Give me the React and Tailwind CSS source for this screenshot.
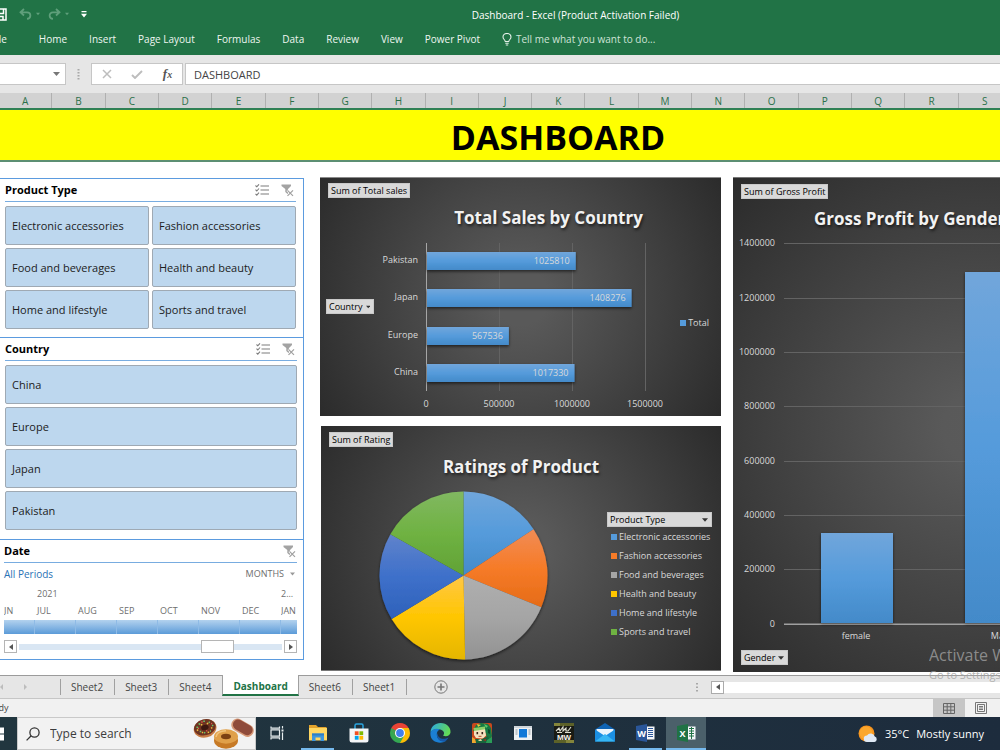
import React from "react";

const COLUMNS = "ABCDEFGHIJKLMNOPQRS".split("");
const RIBBON_TABS = ["Home", "Insert", "Page Layout", "Formulas", "Data", "Review", "View", "Power Pivot"];
const PRODUCTS = [
  "Electronic accessories",
  "Fashion accessories",
  "Food and beverages",
  "Health and beauty",
  "Home and lifestyle",
  "Sports and travel",
];
const COUNTRIES = ["China", "Europe", "Japan", "Pakistan"];
const MONTHS = ["JN", "JUL", "AUG", "SEP", "OCT", "NOV", "DEC", "JAN"];

const SALES = [
  { name: "Pakistan", value: 1025810, y: 22 },
  { name: "Japan", value: 1408276, y: 59 },
  { name: "Europe", value: 567536, y: 97 },
  { name: "China", value: 1017330, y: 134 },
];

const SLICES = [
  { name: "Electronic accessories", from: 0, to: 56.5, top: "#70a6db", mid: "#559bdb", end: "#438ac9" },
  { name: "Fashion accessories", from: 56.5, to: 112.3, top: "#f18c55", mid: "#f67b28", end: "#e56b17" },
  { name: "Food and beverages", from: 112.3, to: 178.9, top: "#afafaf", mid: "#a5a5a5", end: "#929292" },
  { name: "Health and beauty", from: 178.9, to: 238.8, top: "#ffc746", mid: "#ffc600", end: "#e5b600" },
  { name: "Home and lifestyle", from: 238.8, to: 299.5, top: "#6083cb", mid: "#3e70ca", end: "#2e61ba" },
  { name: "Sports and travel", from: 299.5, to: 360, top: "#81b861", mid: "#6fb242", end: "#61a235" },
];

function Caret({ className = "" }) {
  return (
    <svg className={className} width="7" height="4" viewBox="0 0 7 4" aria-hidden="true">
      <path d="M0 0h7L3.5 4z" fill="currentColor" />
    </svg>
  );
}

/* ---------- Ribbon ---------- */

function TitleBar() {
  return (
    <div className="flex h-7 items-center text-white">
      <button type="button" aria-label="Save" className="-ml-1.5">
        <svg width="13" height="13" viewBox="0 0 13 13" fill="none" stroke="#fff" strokeWidth="1.5">
          <path d="M1 1h11v11H1z" />
          <path d="M3.5 1v4.5h6V1M4 12V8.500h5V12" />
        </svg>
      </button>
      <button type="button" aria-label="Undo" className="ml-3 flex items-center gap-1 text-[#5f9f7b]">
        <svg width="13" height="12" viewBox="0 0 13 12" fill="none" stroke="currentColor" strokeWidth="1.8">
          <path d="M5 1L1.500 4.300 5 7.500M2 4.300h6c4.500 0 4.500 6.200 0 6.500" />
        </svg>
        <Caret className="w-1" />
      </button>
      <button type="button" aria-label="Redo" className="ml-2 flex items-center gap-1 text-[#5f9f7b]">
        <svg width="13" height="12" viewBox="0 0 13 12" fill="none" stroke="currentColor" strokeWidth="1.8">
          <path d="M8 1l3.500 3.300L8 7.500M11 4.300H5c-4.500 0-4.500 6.200 0 6.500" />
        </svg>
        <Caret className="w-1" />
      </button>
      <button type="button" aria-label="Customize Quick Access Toolbar" className="ml-3">
        <svg width="6" height="7" viewBox="0 0 6 7" fill="#fff">
          <path d="M0.500 0h5v1.200h-5zM0 2.800h6L3 6.500z" />
        </svg>
      </button>
      <p className="flex-1 pt-0.5 pl-[104px] text-center text-[10px] leading-4">
        Dashboard - Excel (Product Activation Failed)
      </p>
      <div className="w-[4%]" />
    </div>
  );
}

function Ribbon() {
  return (
    <header className="bg-[#217346] font-['Open_Sans',sans-serif]">
      <TitleBar />
      <nav className="-ml-5 flex h-[27px] items-start pt-[3px] text-[10px] leading-4 text-[#eef6f1]">
        <button type="button" className="mr-2.5 px-[11px]">File</button>
        {RIBBON_TABS.map((t) => (
          <button key={t} type="button" className="px-[11px] whitespace-nowrap">{t}</button>
        ))}
        <button type="button" className="flex items-center gap-1 px-[11px] whitespace-nowrap text-[#cfe3d7]">
          <svg width="10" height="13" viewBox="0 0 10 13" fill="none" stroke="#e6f1ea" strokeWidth="1.100">
            <path d="M3.300 8.500C3.300 7 1 6.300 1 4a4 3.500 0 0 1 8 0c0 2.300-2.300 3-2.300 4.500zM3.300 10.300h3.400M3.800 12h2.400" />
          </svg>
          Tell me what you want to do...
        </button>
      </nav>
    </header>
  );
}

function FormulaBar() {
  return (
    <div className="flex h-[38px] items-center bg-[#e6e6e6] font-['Open_Sans',sans-serif]">
      <div className="flex h-[22px] w-[66px] items-center justify-end border border-l-0 border-[#c6c6c6] bg-white pr-[5px] text-[#777]">
        <button type="button" aria-label="Name box"><Caret className="block" /></button>
      </div>
      <svg className="mx-[11px]" width="3" height="11" viewBox="0 0 3 11" fill="#a8a8a8">
        <path d="M0.500 0h2v1.500h-2zM0.500 3h2v1.500h-2zM0.500 6h2v1.500h-2zM0.500 9h2v1.500h-2z" />
      </svg>
      <div className="flex h-[22px] w-[92px] items-center justify-around border border-[#c6c6c6] bg-white">
        <button type="button" aria-label="Cancel">
          <svg width="10" height="10" viewBox="0 0 10 10" stroke="#bdbdbd" strokeWidth="1.500"><path d="M1 1l8 8M9 1L1 9" /></svg>
        </button>
        <button type="button" aria-label="Enter">
          <svg width="12" height="9" viewBox="0 0 12 9" fill="none" stroke="#bdbdbd" strokeWidth="1.900"><path d="M1 5l3 3 7-7" /></svg>
        </button>
        <button type="button" aria-label="Insert function" className="font-['Liberation_Serif',serif] text-[13px] leading-4 font-bold text-[#555] italic">
          f<span className="text-[10px]">x</span>
        </button>
      </div>
      <input
        aria-label="Formula bar"
        defaultValue="DASHBOARD"
        className="ml-0.5 h-[22px] min-w-0 flex-1 border border-r-0 border-[#c6c6c6] bg-white pl-2 text-[11px] text-[#444] outline-none"
      />
    </div>
  );
}

function ColumnHeads() {
  return (
    <div className="overflow-hidden border-b-2 border-[#2f8054] bg-[#d2d2d2]">
      <div className="-ml-px flex h-[15px] w-[101.3%]">
        {COLUMNS.map((c) => (
          <div key={c} className="flex-1 border-r border-[#b0b0b0] text-center font-['Open_Sans',sans-serif] text-[10px] leading-4 text-[#2b7049]">
            {c}
          </div>
        ))}
      </div>
    </div>
  );
}

/* ---------- Slicers ---------- */

function MultiSelectIcon() {
  return (
    <svg width="14" height="12" viewBox="0 0 14 12" fill="none" stroke="#7d7d7d" strokeWidth="1.100">
      <path d="M0.500 1.500l1.300 1.300L4 0.300M0.500 5.700L1.800 7 4 4.500M0.500 9.900l1.300 1.300L4 8.700" />
      <path d="M5.500 2H14M5.500 6H14M5.500 10H14" />
    </svg>
  );
}

function ClearFilterIcon() {
  return (
    <svg width="14" height="13" viewBox="0 0 14 13">
      <path d="M0.500 0.500h9.500v1.500L7 5v5.500L4.300 8V5L0.500 2z" fill="#a3a3a3" />
      <path d="M6.500 6l6 6M12.500 6l-6 6" stroke="#fff" strokeWidth="3" />
      <path d="M6.500 6.300l5.500 5.500M12 6.300l-5.500 5.500" stroke="#a0a0a0" strokeWidth="1.200" />
    </svg>
  );
}

function SlicerHeader({ title, multi = true }) {
  return (
    <div className={multi ? "flex h-[23px] items-center border-b border-[#78ace0] pr-px" : "flex h-[23px] items-center border-b border-[#78ace0]"}>
      <h3 className="flex-1 text-[11px] leading-4 font-bold text-black">{title}</h3>
      {multi && (
        <button type="button" aria-label="Multi-select" className="mr-3"><MultiSelectIcon /></button>
      )}
      <button type="button" aria-label="Clear filter"><ClearFilterIcon /></button>
    </div>
  );
}

function Tile({ children }) {
  return (
    <button type="button" className="h-[39px] rounded-[2px] border border-[#9fa9b3] bg-[#bdd7ee] pl-1.5 text-left text-[11px] leading-4 text-[#1c1c1c]">
      {children}
    </button>
  );
}

function Timeline() {
  return (
    <section className="border-y border-r border-[#5b9bdf] pr-1.5 pb-1.5 pl-1">
      <SlicerHeader title="Date" multi={false} />
      <div className="flex items-center justify-between pt-[3px] text-[10px] leading-4">
        <span className="text-[#2a72b5]">All Periods</span>
        <button type="button" className="flex items-center gap-1.5 pr-0.5 text-[9px] text-[#6e6e6e]">
          MONTHS <Caret className="w-[5px] text-[#999]" />
        </button>
      </div>
      <div className="grid grid-cols-[31px_repeat(6,1fr)_16px] pt-1 text-[9px] leading-4 text-[#6e6e6e]">
        <span className="col-start-2 pl-0.5">2021</span>
        <span className="col-start-8">2...</span>
      </div>
      <div className="grid grid-cols-[31px_repeat(6,1fr)_16px] text-[9px] text-[#6e6e6e]">
        {MONTHS.map((m, i) => (
          <span key={m} className={i === 0 || i === 7 ? "overflow-hidden leading-[18px]" : "pl-0.5 leading-[18px]"}>{m}</span>
        ))}
        {MONTHS.map((m) => (
          <button key={m} type="button" aria-label={m} className="h-[14px] border-r border-[#8fbbe6] bg-linear-to-b from-[#b3d2ee] to-[#5b9bd8] last:border-r-0" />
        ))}
      </div>
      <div className="flex items-center gap-0.5 pt-1.5">
        <button type="button" aria-label="Scroll left" className="flex h-[13px] w-[13px] items-center justify-center border border-[#b5b5b5] bg-white">
          <svg width="4" height="6" viewBox="0 0 4 6"><path d="M4 0v6L0 3z" fill="#555" /></svg>
        </button>
        <input
          type="range"
          aria-label="Timeline position"
          defaultValue="79"
          className="h-[6px] min-w-0 flex-1 appearance-none bg-[#d9e6f3] [&::-webkit-slider-thumb]:h-[13px] [&::-webkit-slider-thumb]:w-[33px] [&::-webkit-slider-thumb]:appearance-none [&::-webkit-slider-thumb]:border [&::-webkit-slider-thumb]:border-[#b5b5b5] [&::-webkit-slider-thumb]:bg-white"
        />
        <button type="button" aria-label="Scroll right" className="flex h-[13px] w-[13px] items-center justify-center border border-[#b5b5b5] bg-white">
          <svg width="4" height="6" viewBox="0 0 4 6"><path d="M0 0v6l4-3z" fill="#555" /></svg>
        </button>
      </div>
    </section>
  );
}

function Slicers() {
  return (
    <aside className="mt-px w-[304px] shrink-0 font-['Open_Sans',sans-serif]">
      <section className="border-t border-r border-[#5b9bdf] pr-[7px] pb-2 pl-[5px]">
        <SlicerHeader title="Product Type" />
        <div className="grid grid-cols-2 gap-[3px] pt-1">
          {PRODUCTS.map((p) => <Tile key={p}>{p}</Tile>)}
        </div>
      </section>
      <section className="border-t border-r border-[#5b9bdf] pr-1.5 pb-[9px] pl-[5px]">
        <SlicerHeader title="Country" />
        <div className="grid gap-[3px] pt-1">
          {COUNTRIES.map((c) => <Tile key={c}>{c}</Tile>)}
        </div>
      </section>
      <Timeline />
    </aside>
  );
}

/* ---------- Charts ---------- */

function FieldButton({ children, caret = false, className = "" }) {
  return (
    <button
      type="button"
      className={`flex h-[15px] items-center justify-between gap-0.5 border border-[#c9c9c9] bg-[#d9d9d9] px-0.5 text-[9px] leading-3 whitespace-nowrap text-black ${className}`}
    >
      {children}
      {caret && <Caret className="mx-px w-1.5 text-[#333]" />}
    </button>
  );
}

function ChartTitle({ children, className = "" }) {
  return (
    <h2 className={`text-[17px] leading-6 font-bold whitespace-nowrap text-[#f2f2f2] [text-shadow:1px_2px_3px_rgba(0,0,0,0.6)] ${className}`}>
      {children}
    </h2>
  );
}

const CHART_BG = "bg-[radial-gradient(circle_at_center,#595959_0%,#595959_12%,#2b2b2b_100%)]";

function BlueDefs({ id }) {
  return (
    <defs>
      <linearGradient id={id} x1="0" y1="0" x2="0" y2="1">
        <stop offset="0" stopColor="#71a6db" />
        <stop offset="0.5" stopColor="#559bdb" />
        <stop offset="1" stopColor="#438ac9" />
      </linearGradient>
      <filter id={`${id}-shadow`} x="-10%" y="-20%" width="120%" height="160%">
        <feDropShadow dx="0" dy="1.500" stdDeviation="1.500" floodColor="#000" floodOpacity="0.6" />
      </filter>
    </defs>
  );
}

function SalesChart() {
  const x = (v) => 52 + (v / 500000) * 73;
  return (
    <section className={`w-[401px] border-t border-[#8a8a8a] ${CHART_BG}`}>
      <div className="flex px-2 pt-[5px]"><FieldButton>Sum of Total sales</FieldButton></div>
      <ChartTitle className="mt-2 pl-14 text-center">Total Sales by Country</ChartTitle>
      <div className="flex items-start">
        <FieldButton caret className="mt-[69px] ml-1.5 w-12">Country</FieldButton>
        <svg className="min-w-0 flex-1" height="186" viewBox="0 0 302 186" preserveAspectRatio="xMinYMin meet" fontSize="9" fill="#d9d9d9">
          <BlueDefs id="sales-blue" />
          <path d="M125.500 13v148M198.500 13v148M271.500 13v148" stroke="#636363" />
          <path d="M52.500 13v148" stroke="#a6a6a6" />
          {SALES.map((s) => (
            <g key={s.name}>
              <text x="44" y={s.y + 11} textAnchor="end">{s.name}</text>
              <rect x="53" y={s.y} width={x(s.value) - 53} height="18" fill="url(#sales-blue)" filter="url(#sales-blue-shadow)" />
              <text x={x(s.value) - 6} y={s.y + 12} textAnchor="end">{s.value}</text>
            </g>
          ))}
          {[0, 500000, 1000000, 1500000].map((t) => (
            <text key={t} x={x(t)} y="177" textAnchor="middle">{t}</text>
          ))}
        </svg>
        <p className="mt-[85px] mr-3 flex items-center gap-0.5 text-[9px] leading-4 text-[#d9d9d9]">
          <span className="h-1.5 w-1.5 bg-[#559bdb]" />Total
        </p>
      </div>
    </section>
  );
}

function point(deg, r, cx, cy) {
  const a = (deg * Math.PI) / 180;
  return `${cx + r * Math.sin(a)} ${cy - r * Math.cos(a)}`;
}

function RatingChart() {
  const cx = 142.5;
  const cy = 96.5;
  const r = 84;
  return (
    <section className={`ml-px w-[400px] border-b border-[#777] ${CHART_BG}`}>
      <div className="flex px-2 pt-1.5"><FieldButton>Sum of Rating</FieldButton></div>
      <ChartTitle className="mt-2 text-center">Ratings of Product</ChartTitle>
      <div className="flex items-start">
        <svg className="min-w-0 flex-1" height="191" viewBox="0 0 286 191">
          <defs>
            {SLICES.map((s, i) => (
              <linearGradient key={s.name} id={`slice-${i}`} x1="0" y1="0" x2="0" y2="1">
                <stop offset="0" stopColor={s.top} />
                <stop offset="0.5" stopColor={s.mid} />
                <stop offset="1" stopColor={s.end} />
              </linearGradient>
            ))}
            <filter id="pie-shadow" x="-10%" y="-10%" width="120%" height="120%">
              <feDropShadow dx="0" dy="1.500" stdDeviation="1.500" floodColor="#000" floodOpacity="0.6" />
            </filter>
          </defs>
          <g filter="url(#pie-shadow)">
            {SLICES.map((s, i) => (
              <path
                key={s.name}
                d={`M${cx} ${cy}L${point(s.from, r, cx, cy)}A${r} ${r} 0 0 1 ${point(s.to, r, cx, cy)}Z`}
                fill={`url(#slice-${i})`}
              />
            ))}
          </g>
        </svg>
        <div className="mt-[33px] mr-[9px] w-[105px]">
          <FieldButton caret className="w-full">Product Type</FieldButton>
          <ul className="text-[9px] leading-[19px] whitespace-nowrap text-[#d9d9d9]">
            {SLICES.map((s) => (
              <li key={s.name} className="flex items-center gap-0.5 pl-1">
                <span className="h-1.5 w-1.5 shrink-0" style={{ background: s.mid }} />
                {s.name}
              </li>
            ))}
          </ul>
        </div>
      </div>
    </section>
  );
}

function ProfitChart() {
  const zero = 392.5;
  const step = 54.3;
  const ticks = [0, 200000, 400000, 600000, 800000, 1000000, 1200000, 1400000];
  return (
    <section className="ml-3 min-w-0 flex-1 overflow-hidden border-t border-[#777] bg-[radial-gradient(circle_at_245px_250px,#5a5a5a_0%,#595959_10%,#2b2b2b_100%)] pb-[7px]">
      <div className="flex px-2 pt-1.5"><FieldButton>Sum of Gross Profit</FieldButton></div>
      <ChartTitle className="mt-2 pl-[81px]">Gross Profit by Gender</ChartTitle>
      <svg className="block" width="340" height="419" viewBox="0 0 340 419" fontSize="9" fill="#d9d9d9">
        <BlueDefs id="profit-blue" />
        {ticks.map((t, i) => (
          <g key={t}>
            <path d={`M51 ${Math.round(zero - i * step) + 0.5}H340`} stroke={i ? "#636363" : "#a0a0a0"} />
            <text x="42" y={zero - i * step + 3} textAnchor="end">{t}</text>
          </g>
        ))}
        <rect x="88" y="302" width="72" height="90" fill="url(#profit-blue)" filter="url(#profit-blue-shadow)" />
        <rect x="232" y="41" width="72" height="351" fill="url(#profit-blue)" filter="url(#profit-blue-shadow)" />
        <path d="M51 393H340" stroke="#a0a0a0" />
        <text x="123" y="408" textAnchor="middle">female</text>
        <text x="268" y="408" textAnchor="middle">Male</text>
      </svg>
      <div className="flex px-2"><FieldButton caret>Gender</FieldButton></div>
    </section>
  );
}

/* ---------- Sheet tabs and status bar ---------- */

function SheetTab({ children }) {
  return (
    <button type="button" className="my-[3px] border-r border-[#a0a0a0] pr-[11px] pl-2.5 text-[#444]">{children}</button>
  );
}

function SheetTabs() {
  return (
    <div className="flex h-6 border-y border-t-[#9b9b9b] border-b-[#c6c6c6] bg-[#e6e6e6] font-['Open_Sans',sans-serif] text-[10px] leading-4">
      <div className="my-[3px] flex w-[61px] items-center gap-5 border-r border-[#a0a0a0] text-[#bdbdbd]">
        <button type="button" aria-label="Previous sheet">
          <svg width="4" height="6" viewBox="0 0 4 6"><path d="M3 0v6L0 3z" fill="currentColor" /></svg>
        </button>
        <button type="button" aria-label="Next sheet">
          <svg width="4" height="6" viewBox="0 0 4 6"><path d="M0 0v6l3-3z" fill="currentColor" /></svg>
        </button>
      </div>
      <SheetTab>Sheet2</SheetTab>
      <SheetTab>Sheet3</SheetTab>
      <button type="button" className="my-[3px] pr-[11px] pl-2.5 text-[#444]">Sheet4</button>
      <button type="button" className="-mt-px mb-0.5 border-x border-b-2 border-x-[#a0a0a0] border-b-[#217346] bg-white px-2.5 pt-0.5 font-bold text-[#217346]">
        Dashboard
      </button>
      <SheetTab>Sheet6</SheetTab>
      <SheetTab>Sheet1</SheetTab>
      <button type="button" aria-label="New sheet" className="ml-[27px]">
        <svg width="14" height="14" viewBox="0 0 14 14" fill="none" stroke="#777">
          <circle cx="7" cy="7" r="6.200" />
          <path d="M7 3.500v7M3.500 7h7" strokeWidth="1.600" />
        </svg>
      </button>
      <div className="flex-1" />
      <div className="flex w-[304px] items-center">
        <svg width="3" height="9" viewBox="0 0 3 9" fill="#a8a8a8"><path d="M0 0h2v1.500H0zM0 3.500h2V5H0zM0 7h2v1.500H0z" /></svg>
        <button type="button" aria-label="Scroll sheet left" className="ml-3 flex h-[13px] w-[13px] items-center justify-center border border-[#ababab] bg-white">
          <svg width="4" height="6" viewBox="0 0 4 6"><path d="M4 0v6L0 3z" fill="#555" /></svg>
        </button>
        <div className="h-[11px] flex-1 bg-white" />
      </div>
    </div>
  );
}

function StatusBar() {
  return (
    <div className="flex h-[18px] justify-end bg-[#f1f1f1] font-['Open_Sans',sans-serif] text-[9px] leading-[17px] text-[#444]">
      <span className="-ml-[17px] flex-1">Ready</span>
      <button type="button" aria-label="Normal view" className="flex w-8 items-center justify-center bg-[#c6c6c6]">
        <svg width="12" height="11" viewBox="0 0 12 11" fill="none" stroke="#666"><path d="M0.500 0.500h11v10H0.500zM0.500 3.800h11M0.500 7.200h11M4.200 0.500v10M7.800 0.500v10" /></svg>
      </button>
      <button type="button" aria-label="Page layout view" className="mr-[3px] flex w-8 items-center justify-center">
        <svg width="12" height="12" viewBox="0 0 12 12" fill="none" stroke="#777"><path d="M0.500 0.500h11v11H0.500zM2.500 2.500h7v7h-7zM4 4.500h4M4 6h4M4 7.500h4" /></svg>
      </button>
    </div>
  );
}

/* ---------- Taskbar ---------- */

function FolderIcon() {
  return (
    <svg width="20" height="18" viewBox="0 0 20 18">
      <path d="M1 1h7l2 2h8.500v4H1z" fill="#e3a32c" />
      <path d="M1 4h18v12.500H1z" fill="#ffd762" />
      <path d="M4 9.500h12V17h-3.500v-3.500h-5V17H4z" fill="#3d96dd" />
      <path d="M4 9.500h12v2H4z" fill="#2e7fc4" />
    </svg>
  );
}

function StoreIcon() {
  return (
    <svg width="20" height="20" viewBox="0 0 20 20">
      <path d="M6 6V2.500Q6 1 7.500 1h5Q14 1 14 2.500V6" fill="none" stroke="#2aa5e0" strokeWidth="1.500" />
      <path d="M0.500 5.500h19V17q0 2.500-2.500 2.500H3Q.5 19.500.5 17z" fill="#f4f6f8" />
      <path d="M5.800 8.300h3.800v3.800H5.800z" fill="#f25022" /><path d="M10.400 8.300h3.800v3.800h-3.800z" fill="#7fba00" />
      <path d="M5.800 12.900h3.800v3.800H5.800z" fill="#00a4ef" /><path d="M10.400 12.900h3.800v3.800h-3.800z" fill="#ffb900" />
    </svg>
  );
}

function ChromeIcon() {
  return (
    <svg width="20" height="20" viewBox="0 0 20 20">
      <path d="M10 10L1.340 5A10 10 0 0 1 18.660 5z" fill="#ea4335" />
      <path d="M10 10V5h8.660A10 10 0 0 1 10 20z" fill="#fbbc05" />
      <path d="M1.340 5A10 10 0 0 0 10 20l4.330-7.500H10z" fill="#34a853" />
      <path d="M1.340 5h8.660v5l-4.330 2.500z" fill="#ea4335" />
      <path d="M1.340 5l4.330 7.500L10 10z" fill="#34a853" />
      <circle cx="10" cy="10" r="5" fill="#fff" />
      <circle cx="10" cy="10" r="3.900" fill="#3f7fee" />
    </svg>
  );
}

function EdgeIcon() {
  return (
    <svg width="21" height="20" viewBox="0 0 21 20">
      <defs>
        <linearGradient id="edge-top" x1="0" y1="0" x2="1" y2="0.300">
          <stop offset="0" stopColor="#2aa7e8" /><stop offset="1" stopColor="#62d957" />
        </linearGradient>
      </defs>
      <path d="M0.500 9C1 3.500 5 0 10.500 0 17 0 21 5 20.500 9.500 20 13 16 14 13 12.500c1-1 1.500-2.500.5-4C11.500 5.500 4.500 4.500 0.500 9z" fill="url(#edge-top)" />
      <path d="M0.500 9c2.500-3.300 6.500-4 9.500-2.500-3 1-4 4.500-2.500 8 1.500 3 5 4.500 8.500 3.500C10 22-1 19 0.500 9z" fill="#1b7fd4" />
      <path d="M7.500 10c0 5 5 7.500 11 4.500-1 2-2 3-3.500 3.800C9 19.500 5.500 14 7.500 10z" fill="#1658a8" />
    </svg>
  );
}

function GameIcon() {
  return (
    <svg width="20" height="20" viewBox="0 0 20 20">
      <rect width="20" height="20" rx="2" fill="#c9481c" />
      <path d="M1 8L4 2l5-2 7 1 3 4 1 8-2 4-3 1-1-8z" fill="#157a42" />
      <path d="M5 1l4 1-3 2z" fill="#f6c33b" /><path d="M12 1l4 2-2 2z" fill="#5ecb68" />
      <path d="M16 6l2 1v4l-2-1z" fill="#0c4a2a" />
      <path d="M2 7l11-1.500 1 7-3 3-7-.5L2 12z" fill="#f4e2bd" />
      <path d="M1.500 5l11.500-1.500v2.700L2 8z" fill="#8bd068" />
      <path d="M4.500 9h1.600v2.300H4.500zM9.500 9h1.600v2.300H9.500z" fill="#3a241a" />
      <path d="M6.500 13.300h3" stroke="#b04a2d" />
      <path d="M3 16h7l6-3 1 4-3 3H4z" fill="#17663c" />
      <path d="M0 14l3 2 1 4H0z" fill="#eda72f" /><path d="M15 17l5-3v6h-6z" fill="#2a9d57" />
      <path d="M6 17l3-1 1 2H7z" fill="#e8d9a0" /><path d="M11 17l3-1v2z" fill="#b3251f" />
    </svg>
  );
}

function WindowIcon() {
  return (
    <svg width="18" height="14" viewBox="0 0 18 14">
      <path d="M0 0h18v14H0z" fill="#eef1f3" /><path d="M0 0h18v2H0z" fill="#cfd6db" />
      <path d="M5 3h8v8.500H5z" fill="#1279d8" />
      <path d="M1.500 4h2M1.500 6h2M1.500 8h2M14.500 4h2M14.500 6h2M14.500 8h2" stroke="#8a979e" />
    </svg>
  );
}

function WarfareIcon() {
  return (
    <svg width="20" height="20" viewBox="0 0 20 20">
      <path d="M0 0h20v20H0z" fill="#5c6128" /><path d="M0 3h20v14H0z" fill="#1a1b14" />
      <path d="M0 0h6v3H0zM12 17h8v3h-8z" fill="#84853b" />
      <path d="M2 8l3-3 1 3 3-4v4l3-3v3h2l3-4M3 9.500h5M11 9.500h6" stroke="#dedfd2" fill="none" strokeWidth="1.100" />
      <text x="10" y="17" textAnchor="middle" fontFamily="Liberation Sans, sans-serif" fontWeight="bold" fontSize="8" fill="#f2f2ea">MW</text>
    </svg>
  );
}

function MailIcon() {
  return (
    <svg width="20" height="19" viewBox="0 0 20 19">
      <path d="M0 6.500L10 0l10 6.500V18H0z" fill="#0f64b4" />
      <path d="M1.500 6h17v7h-17z" fill="#e9f4fc" />
      <path d="M0 6.500l10 6.500 10-6.500V18.500H0z" fill="#1b8fe2" />
      <path d="M0 18.500l10-7.500 10 7.500z" fill="#36b6f4" />
    </svg>
  );
}

function OfficeIcon({ letter, dark, rows }) {
  return (
    <svg width="19" height="18" viewBox="0 0 19 18">
      <path d="M9 2.500h9.500v13H9z" fill="#f5f7fa" />
      <path d={rows} stroke={dark} fill="none" />
      <path d="M0 2l11-2v18L0 16z" fill={dark} />
      <text x="5.500" y="12.500" textAnchor="middle" fontFamily="Open Sans, sans-serif" fontWeight="bold" fontSize="9" fill="#fff">{letter}</text>
    </svg>
  );
}

function Pastries() {
  return (
    <svg width="62" height="31" viewBox="0 0 62 31">
      <g transform="rotate(-14 12 10)">
        <ellipse cx="12" cy="10.500" rx="11.500" ry="9" fill="#c77b45" />
        <ellipse cx="12" cy="9.300" rx="11" ry="8" fill="#6e3322" />
        <ellipse cx="12" cy="9.500" rx="3.800" ry="2.600" fill="#3c170f" />
        <path d="M4 7l1.500 1M7 4l1 1.500M12 3l1.500.5M17 5l1 1M19.500 9l1 1M6 12l1.500.5M10 15l1-1M16 14l1 .5" stroke="#69c36b" strokeWidth="1.500" />
        <path d="M3.500 10.500l1.500-.5M9 6.500l1-1M15 7l1-1.500M18 12l1-1M8 14l1-.5M13.500 15h1.500" stroke="#f0c13f" strokeWidth="1.500" />
        <path d="M10 4l1-1M5 9l1-.5M20 7.500l-1-.5M12.500 13.500l1-.5" stroke="#e2574f" strokeWidth="1.500" />
      </g>
      <rect x="37.500" y="3.500" width="24" height="12.500" rx="6.200" fill="#d79a78" transform="rotate(30 49.500 9.800)" />
      <rect x="39" y="4" width="21" height="10.500" rx="5.200" fill="#8f4b3a" transform="rotate(30 49.500 9.800)" />
      <ellipse cx="33" cy="22.500" rx="12" ry="8.300" fill="#c77a26" />
      <ellipse cx="33" cy="18.500" rx="12" ry="7.200" fill="#e0a04a" />
      <ellipse cx="33" cy="18.500" rx="5" ry="2.700" fill="#7c4012" />
      <path d="M23 19q1-6 10-6.200" stroke="#f2c47c" strokeWidth="1.500" fill="none" />
    </svg>
  );
}

function TaskViewIcon() {
  return (
    <svg width="14" height="14" viewBox="0 0 14 14" fill="none" stroke="#e8eef0" strokeWidth="1.200">
      <path d="M1 3.800h8.500v6.400H1zM1 0.500v1.700h8.500V.5M1 13.500v-1.700h8.500v1.700M12.500 0v2.500M12.500 6.500V14" />
      <path d="M11.500 3.500h2v2h-2z" fill="#e8eef0" stroke="none" />
    </svg>
  );
}

const APPS = [
  { name: "Task view", icon: <TaskViewIcon /> },
  { name: "File Explorer", icon: <FolderIcon />, open: true },
  { name: "Microsoft Store", icon: <StoreIcon /> },
  { name: "Chrome", icon: <ChromeIcon /> },
  { name: "Edge", icon: <EdgeIcon /> },
  { name: "Game", icon: <GameIcon /> },
  { name: "Run", icon: <WindowIcon /> },
  { name: "Warfare", icon: <WarfareIcon /> },
  { name: "Mail", icon: <MailIcon /> },
  { name: "Word", icon: <OfficeIcon letter="W" dark="#2a5699" rows="M12 4.500h5M12 6.500h5M12 8.500h5M12 10.500h5M12 12.500h5" />, open: true },
  { name: "Excel", icon: <OfficeIcon letter="X" dark="#207245" rows="M12 4.500h5M12 7h5M12 9.500h5M12 12h5M14.500 3v12" />, active: true },
];

function appClass(app) {
  if (app.active) return "flex w-10 items-center justify-center border-b-2 border-[#76b9ed] bg-[#4b606a]";
  if (app.open) return "mx-1 flex w-[33px] items-center justify-center border-b-2 border-[#76b9ed]";
  return "flex w-[41px] items-center justify-center border-b-2 border-transparent";
}

function Taskbar() {
  return (
    <footer className="flex h-[33px] bg-linear-to-r from-[#21363f] to-[#1d2c3d] font-['Open_Sans',sans-serif]">
      <button type="button" aria-label="Start" className="flex w-[17px] items-center">
        <svg width="4" height="14" viewBox="0 0 4 14" fill="#fff"><path d="M0 0.500h4v6H0zM0 7.500h4v6H0z" /></svg>
      </button>
      <label className="flex w-[239px] items-center border border-[#c9c9c9] bg-[#f2f2f2] pl-2">
        <svg width="14" height="14" viewBox="0 0 14 14" fill="none" stroke="#333" strokeWidth="1.300">
          <circle cx="8.500" cy="5.500" r="4.600" /><path d="M5.200 8.800L0.600 13.400" />
        </svg>
        <input type="text" aria-label="Search" placeholder="Type to search" className="ml-2.5 w-0 flex-1 bg-transparent text-[12px] leading-4 outline-none placeholder:text-[#3c3c3c]" />
        <Pastries />
      </label>
      {APPS.map((app) => (
        <button key={app.name} type="button" aria-label={app.name} className={appClass(app)}>{app.icon}</button>
      ))}
      <div className="flex-1" />
      <button type="button" className="mr-4 flex items-center gap-[7px] text-[11px] leading-4 whitespace-nowrap text-white">
        <svg width="20" height="18" viewBox="0 0 20 18">
          <circle cx="8.500" cy="8.500" r="8" fill="#f7941e" />
          <circle cx="8" cy="8" r="6.500" fill="#fba72d" />
          <path d="M9 17a3.200 3.200 0 0 1 0-6.400 4.300 4.300 0 0 1 7.800 1A2.800 2.800 0 0 1 16.500 17z" fill="#dfe9f5" />
        </svg>
        <span>35°C</span>
        <span>Mostly sunny</span>
      </button>
    </footer>
  );
}

export default function App() {
  return (
    <div className="relative flex min-h-screen flex-col overflow-hidden bg-white">
      <Ribbon />
      <FormulaBar />
      <ColumnHeads />
      <div className="border-b-2 border-[#5c8f73] bg-[#ffff00] pt-1 pl-[116px] text-center">
        <h1 className="font-['Open_Sans',sans-serif] text-[34px] leading-[46px] font-bold text-black">DASHBOARD</h1>
      </div>
      <main className="flex flex-1 items-start pt-[15px] pb-[3px] font-['Open_Sans',sans-serif]">
        <Slicers />
        <div className="ml-4 flex shrink-0 flex-col gap-2.5">
          <SalesChart />
          <RatingChart />
        </div>
        <ProfitChart />
      </main>
      <SheetTabs />
      <StatusBar />
      <Taskbar />
      <div className="pointer-events-none absolute right-0 bottom-[67px] w-[71px] overflow-hidden font-['Open_Sans',sans-serif] whitespace-nowrap text-[#a0a0a0]/80">
        <p className="text-[16px] leading-6">Activate Windows</p>
        <p className="text-[11px] leading-4">Go to Settings to activate Windows.</p>
      </div>
    </div>
  );
}
